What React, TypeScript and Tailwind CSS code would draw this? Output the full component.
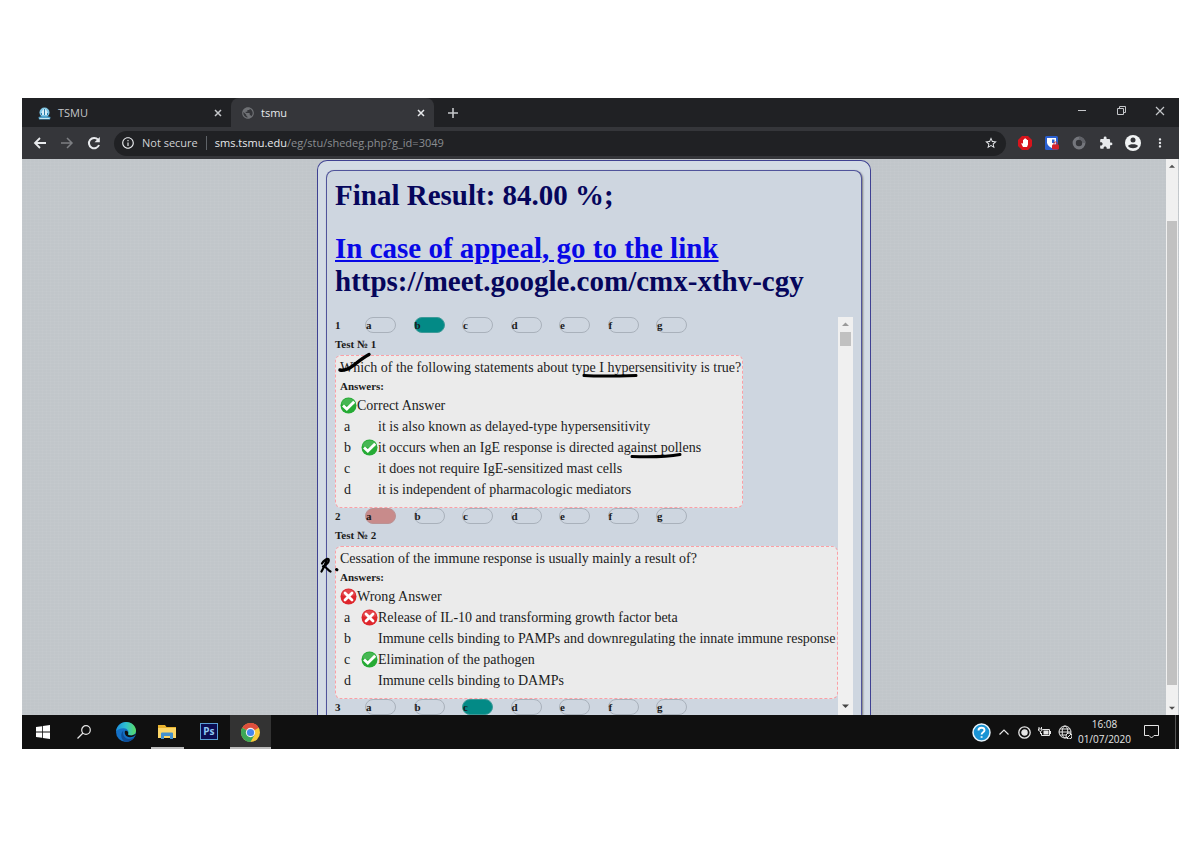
import type { ReactNode } from 'react';
import {
  MdExtension,
  MdInfoOutline,
  MdMoreVert,
  MdPublic,
  MdStarBorder,
} from 'react-icons/md';
import { clsx } from 'clsx';

type Mark = 'right' | 'wrong';

interface Question {
  number: number;
  chosen: string;
  chosenMark: Mark;
  text?: string;
  answers?: { key: string; text: string; mark?: Mark }[];
  ink?: ReactNode;
}

const OPTIONS = ['a', 'b', 'c', 'd', 'e', 'f', 'g'];

const QUESTIONS: Question[] = [
  {
    number: 1,
    chosen: 'b',
    chosenMark: 'right',
    text: 'Which of the following statements about type I hypersensitivity is true?',
    answers: [
      { key: 'a', text: 'it is also known as delayed-type hypersensitivity' },
      { key: 'b', text: 'it occurs when an IgE response is directed against pollens', mark: 'right' },
      { key: 'c', text: 'it does not require IgE-sensitized mast cells' },
      { key: 'd', text: 'it is independent of pharmacologic mediators' },
    ],
    ink: (
      <svg className="pointer-events-none absolute -top-1 left-0 h-28 w-[398px]" viewBox="0 0 398 112" fill="none" stroke="#000" strokeWidth="3" strokeLinecap="round" aria-hidden="true">
        <path d="M4 18C9 19 13 17 18 13C23 9 28 5 33 2.500" strokeWidth="3.500" />
        <path d="M248 23.500C264 24.500 284 24 300 23.500" />
        <path d="M296 104.500C311 105 330 105 344 102.500" />
      </svg>
    ),
  },
  {
    number: 2,
    chosen: 'a',
    chosenMark: 'wrong',
    text: 'Cessation of the immune response is usually mainly a result of?',
    answers: [
      { key: 'a', text: 'Release of IL-10 and transforming growth factor beta', mark: 'wrong' },
      { key: 'b', text: 'Immune cells binding to PAMPs and downregulating the innate immune response' },
      { key: 'c', text: 'Elimination of the pathogen', mark: 'right' },
      { key: 'd', text: 'Immune cells binding to DAMPs' },
    ],
    ink: (
      <svg className="pointer-events-none absolute top-2.5 -left-4 h-5 w-5" viewBox="0 0 20 20" fill="none" stroke="#000" strokeWidth="3" strokeLinecap="round" strokeLinejoin="round" aria-hidden="true">
        <path d="M2 6.500C3.500 3.500 7 1.200 8.500 2.200C9.500 4.500 6.500 7.500 3 9.500M6.500 3C5.500 7.500 3.500 11 1.500 14.500M3.500 9.500C6.500 9.500 7.500 13 10.500 14.500" strokeWidth="2.200" />
        <path d="M16.500 12.500L17 12.800" />
      </svg>
    ),
  },
  { number: 3, chosen: 'c', chosenMark: 'right' },
];

function MarkIcon({ mark }: { mark: Mark }) {
  return (
    <svg className="h-[17px] w-[17px] shrink-0" viewBox="0 0 17 17" fill="none" aria-hidden="true">
      <circle cx="8.500" cy="8.500" r="8" fill={mark === 'right' ? '#26ab35' : '#de262c'} />
      <path d="M1.500 7A7.200 7.200 0 0 1 15.500 7C11 9 6 9 1.500 7Z" fill="#fff" opacity="0.15" />
      {mark === 'right' ? (
        <path d="M3 8.500L6.800 12L14.200 4.800" stroke="#fff" strokeWidth="2.800" />
      ) : (
        <path d="M5 5L12 12M12 5L5 12" stroke="#fff" strokeWidth="2.800" strokeLinecap="round" />
      )}
    </svg>
  );
}

function CloseIcon() {
  return (
    <svg className="h-2 w-2" viewBox="0 0 8 8" stroke="currentColor" strokeWidth="1.500" aria-hidden="true">
      <path d="M1 1L7 7M7 1L1 7" />
    </svg>
  );
}

function TabStrip() {
  return (
    <div className="flex h-[29px] items-stretch bg-[#202124] text-[11px] text-[#c5c7ca]">
      <div className="flex w-[209px] items-center pt-px pr-[9px] pl-4">
        <svg className="mr-[7px] h-[13px] w-[13px]" viewBox="0 0 13 13" aria-hidden="true">
          <circle cx="6.500" cy="5.500" r="5" fill="#7fc6e4" />
          <path d="M6.500 1.500C4 3 3 5.500 3.500 8H9.500C10 5.500 9 3 6.500 1.500Z" fill="#d9eff7" />
          <path d="M3.500 8V6M6.500 2V8M9.500 8V6" stroke="#2a7fae" fill="none" />
          <path d="M0.500 10C4 8.500 9 8.500 12.500 10L12 12.500H1Z" fill="#4fa3cb" />
          <path d="M1.500 11.500H11.500" stroke="#c8e8f2" />
        </svg>
        <span className="flex-1">TSMU</span>
        <button aria-label="Close TSMU tab"><CloseIcon /></button>
      </div>
      <div className="flex w-[203px] items-center rounded-t-lg bg-[#35363a] pt-px pr-[9px] pl-2.5 text-[#e8eaed]">
        <MdPublic className="mr-1.5 h-3.5 w-3.5 text-[#6f7175]" />
        <span className="flex-1 font-medium">tsmu</span>
        <button aria-label="Close tsmu tab"><CloseIcon /></button>
      </div>
      <button aria-label="New tab" className="ml-3.5">
        <svg className="h-2.5 w-2.5" viewBox="0 0 10 10" stroke="currentColor" strokeWidth="1.600" aria-hidden="true">
          <path d="M5 0V10M0 5H10" />
        </svg>
      </button>
      <div className="mr-3.5 ml-auto flex items-center gap-[29px] pb-1">
        <button aria-label="Minimize">
          <svg className="h-2.5 w-2.5" viewBox="0 0 10 10" stroke="currentColor" aria-hidden="true"><path d="M1 4.500H9" /></svg>
        </button>
        <button aria-label="Restore">
          <svg className="h-2.5 w-2.5" viewBox="0 0 10 10" fill="none" stroke="currentColor" aria-hidden="true">
            <path d="M1.500 2.500H7.500V8.500H1.500ZM3.500 2.500V0.500H9.500V6.500H7.500" />
          </svg>
        </button>
        <button aria-label="Close window">
          <svg className="h-2.5 w-2.5" viewBox="0 0 10 10" stroke="currentColor" strokeWidth="1.200" aria-hidden="true"><path d="M1 1L9 9M9 1L1 9" /></svg>
        </button>
      </div>
    </div>
  );
}

function Toolbar() {
  return (
    <div className="flex h-8 items-center bg-[#35363a] pr-3 pl-2.5 text-[#e8eaed]">
      <div className="flex items-center gap-[11px]">
        <button aria-label="Back">
          <svg className="h-4 w-4" viewBox="0 0 16 16" fill="none" stroke="currentColor" strokeWidth="1.800" aria-hidden="true">
            <path d="M14 8H3.500M8 3L3 8L8 13" />
          </svg>
        </button>
        <button aria-label="Forward" className="text-[#7d7f83]">
          <svg className="h-4 w-4" viewBox="0 0 16 16" fill="none" stroke="currentColor" strokeWidth="1.500" aria-hidden="true">
            <path d="M2 8H12.500M8 3L13 8L8 13" />
          </svg>
        </button>
        <button aria-label="Reload">
          <svg className="h-4 w-4" viewBox="0 0 16 16" fill="none" stroke="currentColor" strokeWidth="2" aria-hidden="true">
            <path d="M13 10A5.200 5.200 0 1 1 12 4.600" />
            <path d="M13.800 2V7.300H8.500Z" fill="currentColor" stroke="none" />
          </svg>
        </button>
      </div>
      <div className="ml-3 flex h-[25px] flex-1 items-center rounded-full bg-[#202124] pr-2 pl-[7px] text-[11px] font-medium">
        <MdInfoOutline className="mr-[7px] h-3.5 w-3.5" />
        <span className="text-[#d0d2d5]">Not secure</span>
        <span className="mx-2 h-3.5 w-px bg-[#5f6368]" />
        <span className="flex-1 text-[#8a8d91]"><span className="text-[#e8eaed]">sms.tsmu.edu</span>/eg/stu/shedeg.php?g_id=3049</span>
        <button aria-label="Bookmark this page"><MdStarBorder className="h-3.5 w-3.5" /></button>
      </div>
      <div className="ml-3 flex items-center gap-[13px]">
        <button aria-label="Ad blocker">
          <svg className="h-3.5 w-3.5" viewBox="0 0 14 14" aria-hidden="true">
            <path d="M4 0H10L14 4V10L10 14H4L0 10V4Z" fill="#d8141c" />
            <path d="M5 11L3.200 7.500L4.200 7L5 8V3.800H6V2.800H7V2.500H8V3.200H9V4H10V8.500L9 11H5Z" fill="#fff" />
          </svg>
        </button>
        <button aria-label="Password manager">
          <svg className="h-3.5 w-3.5" viewBox="0 0 14 14" aria-hidden="true">
            <rect width="13" height="14" rx="1.500" fill="#2a5fd0" />
            <path d="M2 2H11V6.500C11 9 9 11 6.700 12C4.500 11 2 9 2 6.500Z" fill="#fff" />
            <path d="M7 3.500H9.500V7H7Z" fill="#2a5fd0" />
            <rect x="7" y="8.500" width="7" height="5" rx="1" fill="#d4202c" />
            <path d="M9 9V7.500A1.500 1.500 0 0 1 12 7.500V9" fill="none" stroke="#d4202c" />
          </svg>
        </button>
        <button aria-label="Privacy extension">
          <svg className="h-3.5 w-3.5" viewBox="0 0 14 14" fill="none" aria-hidden="true">
            <circle cx="7" cy="7" r="4.800" stroke="#74767c" strokeWidth="3.200" />
            <path d="M7 2.200A4.800 4.800 0 0 1 11.800 7" stroke="#606268" strokeWidth="3.200" />
          </svg>
        </button>
        <button aria-label="Extensions"><MdExtension className="h-3.5 w-3.5" /></button>
        <button aria-label="Profile" className="-mx-px">
          <svg className="h-4 w-4" viewBox="0 0 16 16" aria-hidden="true">
            <circle cx="8" cy="8" r="8" fill="#f1f3f4" />
            <circle cx="8" cy="5" r="2.500" fill="#35363a" />
            <path d="M3 11C4 8.500 12 8.500 13 11C11 14 5 14 3 11Z" fill="#35363a" />
          </svg>
        </button>
        <button aria-label="Menu"><MdMoreVert className="h-3.5 w-3.5" /></button>
      </div>
    </div>
  );
}

function ScrollArrow({ up, className }: { up?: boolean; className?: string }) {
  return (
    <svg className={clsx('h-3.5 w-full', className)} viewBox="0 0 14 14" aria-hidden="true">
      <path d={up ? 'M3.500 9H10.500L7 5.500Z' : 'M3.500 5.500H10.500L7 9Z'} fill="currentColor" />
    </svg>
  );
}

function AnswerKey({ question }: { question: Question }) {
  return (
    <div className="flex h-4 items-center text-[11px] font-bold">
      <span className="w-[30px] leading-3">{question.number}</span>
      <div className="flex w-[322px] justify-between">
        {OPTIONS.map((option) => (
          <span
            key={option}
            className={clsx(
              'h-4 w-[31px] rounded-full border leading-[14px]',
              option !== question.chosen && 'border-[#a9b1bb]',
              option === question.chosen && question.chosenMark === 'right' && 'border-[#3d9a98] bg-[#038a86]',
              option === question.chosen && question.chosenMark === 'wrong' && 'border-[#bb9294] bg-[#c88b8b]',
            )}
          >
            {option}
          </span>
        ))}
      </div>
    </div>
  );
}

function QuestionBlock({ question }: { question: Question }) {
  return (
    <section>
      <AnswerKey question={question} />
      {question.answers && (
        <>
          <h2 className="py-[3px] text-[11px] leading-4 font-bold">Test № {question.number}</h2>
          <div className="relative w-fit rounded-md border border-dashed border-[#fba0a6] bg-[#ebebeb] pt-0.5 pr-px pb-[7px] pl-1 text-[14px] whitespace-nowrap text-[#1c1c1c]">
            <p className="leading-[19px]">{question.text}</p>
            <h3 className="text-[11px] leading-[18px] font-bold">Answers:</h3>
            <p className="flex h-[21px] items-center leading-[21px]">
              <MarkIcon mark={question.chosenMark} />
              {question.chosenMark === 'right' ? 'Correct Answer' : 'Wrong Answer'}
            </p>
            <ul>
              {question.answers.map((answer) => (
                <li key={answer.key} className="flex h-[21px] items-center pl-1 leading-[21px]">
                  <span className="w-[17px]">{answer.key}</span>
                  <span className="w-[17px]">{answer.mark && <MarkIcon mark={answer.mark} />}</span>
                  {answer.text}
                </li>
              ))}
            </ul>
            {question.ink}
          </div>
        </>
      )}
    </section>
  );
}

function ResultPage() {
  return (
    <div className="flex min-h-0 flex-1 bg-[#c1c6ca] bg-[repeating-linear-gradient(0deg,#ffffff08_0px,#ffffff08_1px,transparent_1px,transparent_3px),repeating-linear-gradient(90deg,#ffffff08_0px,#ffffff08_1px,transparent_1px,transparent_4px)]">
      <main className="min-w-0 flex-1 overflow-hidden pt-px font-['Liberation_Serif',serif]">
        <div className="mx-auto flex h-full w-[554px] flex-col rounded-t-[10px] border border-b-0 border-[#3f4192] bg-[#d3dbe5] px-2 pt-[9px]">
          <div className="flex min-h-0 flex-1 flex-col rounded-t-lg border border-b-0 border-[#50549b] bg-[#ced6e0] pt-2 pl-2 shadow-[1px_1px_2px_#777]">
            <h1 className="text-[29px] leading-8 font-bold text-[#06065c]">Final Result: 84.00 %;</h1>
            <p className="mt-[21px] text-[29px] leading-[33px] font-bold text-[#06065c]">
              <a href="https://meet.google.com/cmx-xthv-cgy" className="text-[#0808e6] underline">In case of appeal, go to the link</a>
              <br />
              https://meet.google.com/cmx-xthv-cgy
            </p>
            <div className="mt-[19px] flex min-h-0 flex-1 pr-2">
              <div className="min-w-0 flex-1 text-[#1a1a1a]">
                {QUESTIONS.map((question) => (
                  <QuestionBlock key={question.number} question={question} />
                ))}
              </div>
              <div className="flex w-[15px] flex-col bg-[#f0f0f0]">
                <ScrollArrow up className="text-[#9a9a9a]" />
                <div className="mx-0.5 mt-px h-3.5 bg-[#c1c1c1]" />
                <ScrollArrow className="mt-auto mb-0.5 text-[#444]" />
              </div>
            </div>
          </div>
        </div>
      </main>
      <div className="mr-px flex w-3 flex-col bg-[#f0f0f0]">
        <ScrollArrow up className="text-[#505050]" />
        <div className="mx-px mt-12 flex-1 bg-[#c1c1c1]" />
        <ScrollArrow className="mt-4 text-[#505050]" />
      </div>
    </div>
  );
}

function Taskbar() {
  return (
    <footer className="flex h-[34px] items-stretch bg-[#101010] text-[#e6e6e6]">
      <div className="grid w-[249px] grid-cols-6">
        <button aria-label="Start" className="flex items-center justify-center">
          <svg className="h-3.5 w-3.5" viewBox="0 0 14 14" fill="#fff" aria-hidden="true">
            <path d="M0 2L6 1.200V6.600H0ZM6.800 1.100L14 0V6.600H6.800ZM0 7.400H6V12.800L0 12ZM6.800 7.400H14V14L6.800 12.900Z" />
          </svg>
        </button>
        <button aria-label="Search" className="flex items-center justify-center">
          <svg className="h-3.5 w-3.5" viewBox="0 0 14 14" fill="none" stroke="#e6e6e6" strokeWidth="1.200" aria-hidden="true">
            <circle cx="9" cy="5" r="4.300" />
            <path d="M6 8L0.500 13.500" />
          </svg>
        </button>
        <button aria-label="Microsoft Edge" className="flex items-center justify-center">
          <svg className="h-5 w-5" viewBox="0 0 20 20" aria-hidden="true">
            <defs>
              <linearGradient id="edge-top" x1="0" y1="0.500" x2="1" y2="0.500">
                <stop offset="0" stopColor="#1b8fe0" />
                <stop offset="0.500" stopColor="#2fc0cf" />
                <stop offset="1" stopColor="#5bdc62" />
              </linearGradient>
            </defs>
            <circle cx="10" cy="10" r="10" fill="#1470c6" />
            <path d="M0 9.500C0.500 4 5 0 10.200 0C16 0 20 4.300 20 8.500C20 11.500 17.800 13.500 15 13.500C12.500 13.500 11.500 12.500 12.200 11.500C13.300 9.500 11.500 6.500 8 6.300C4.500 6 1.500 7.500 0 9.500Z" fill="url(#edge-top)" />
            <path d="M7.500 8.500C5.800 12.500 9 17.800 14.500 16.800C16.500 16.500 18 15.500 18.700 14.500C16.500 19 12 20.200 9.500 19.900C4.500 18 4 11.500 7.500 8.500Z" fill="#0d4d98" />
            <path d="M9 9C8 11.500 9.800 15.200 14 15.300C16.500 15.300 18.500 14 20 12.500C19.500 12 18.500 12.800 15.500 13.500C12.500 13.500 11.500 12.500 12.200 11.500C12.700 10 11 8 9 9Z" fill="#101010" />
          </svg>
        </button>
        <button aria-label="File Explorer" className="relative flex items-center justify-center">
          <svg className="h-4 w-[18px]" viewBox="0 0 18 16" aria-hidden="true">
            <path d="M0 1H7L8.500 3H18V14H0Z" fill="#e9b32e" />
            <path d="M0 4H18V14H0Z" fill="#fcd667" />
            <path d="M3 15V9.500Q3 8.500 4 8.500H14Q15 8.500 15 9.500V15H12V12H6V15Z" fill="#4391ce" />
          </svg>
          <span className="absolute inset-x-1 bottom-0 h-0.5 bg-[#bcbcbc]" />
        </button>
        <button aria-label="Photoshop" className="flex items-center justify-center pb-0.5">
          <span className="flex h-[17px] w-[18px] items-center justify-center border border-[#5b9fd4] bg-[#0b0d52] text-[10px] font-bold text-[#8fc8f2]">Ps</span>
        </button>
        <button aria-label="Google Chrome" className="relative flex items-center justify-center bg-[#333]">
          <svg className="h-[19px] w-[19px]" viewBox="0 0 18 18" aria-hidden="true">
            <circle cx="9" cy="9" r="9" fill="#f8cb3a" />
            <path d="M9 9L1.200 4.500A9 9 0 0 1 16.800 4.500Z" fill="#de4f3e" />
            <path d="M9 4.500H16.800A9 9 0 0 0 9 0Z" fill="#de4f3e" />
            <path d="M1.200 4.500A9 9 0 0 0 9 18L12.900 11.200L9 9Z" fill="#3da757" />
            <circle cx="9" cy="9" r="4.400" fill="#f3f3f3" />
            <circle cx="9" cy="9" r="3.400" fill="#4587ee" />
          </svg>
          <span className="absolute inset-x-0 bottom-0 h-0.5 bg-[#bcbcbc]" />
        </button>
      </div>
      <div className="ml-auto flex items-center">
        <button aria-label="Get help">
          <svg className="h-[19px] w-[19px]" viewBox="0 0 19 19" fill="none" aria-hidden="true">
            <circle cx="9.500" cy="9.500" r="8.500" fill="#1a93d4" stroke="#e8f4fb" strokeWidth="1.500" />
            <path d="M6.500 7.500C6.500 5.700 7.800 4.800 9.500 4.800C11.300 4.800 12.500 5.800 12.500 7.200C12.500 9.200 9.600 9.200 9.600 11.500M9.600 13.200V14.800" stroke="#fff" strokeWidth="1.900" />
          </svg>
        </button>
        <button aria-label="Show hidden icons" className="ml-2">
          <svg className="h-2.5 w-2.5" viewBox="0 0 10 10" fill="none" stroke="currentColor" strokeWidth="1.200" aria-hidden="true"><path d="M0.500 7.500L5 3L9.500 7.500" /></svg>
        </button>
        <svg className="ml-[9px] h-[13px] w-[13px]" viewBox="0 0 13 13" fill="none" stroke="currentColor" strokeWidth="1.300" aria-hidden="true">
          <circle cx="6.500" cy="6.500" r="5.700" />
          <circle cx="6.500" cy="6.500" r="2.600" fill="currentColor" />
        </svg>
        <svg className="ml-[7px] h-[13px] w-[13px]" viewBox="0 0 13 13" fill="none" stroke="currentColor" aria-hidden="true">
          <path d="M4.500 3.500H11.500V9.500H3.500V7M1 1V3M3.500 1V3M0.500 3H4V4.500L2.500 5.500L0.500 4.500ZM2.500 5.500V8M12.500 5V8" />
          <path d="M5.500 6.500H10.500" strokeWidth="4" />
        </svg>
        <svg className="ml-[7px] h-3.5 w-3.5" viewBox="0 0 14 14" fill="none" stroke="currentColor" aria-hidden="true">
          <circle cx="7" cy="7" r="6" />
          <ellipse cx="7" cy="7" rx="2.800" ry="6" />
          <path d="M1 7H13M2 4H12M2 10H12" />
          <circle cx="11" cy="11" r="3" fill="#101010" />
          <path d="M9 13L13 9" />
        </svg>
        <time className="ml-1.5 text-center text-[10px] leading-[15px]">
          16:08
          <br />
          01/07/2020
        </time>
        <button aria-label="Notifications" className="ml-[13px]">
          <svg className="h-3.5 w-[15px]" viewBox="0 0 15 14" fill="none" stroke="currentColor" aria-hidden="true">
            <path d="M0.500 0.500H14.500V10.500H10L7.500 13L5 10.500H0.500Z" />
          </svg>
        </button>
        <span className="mr-[3px] ml-4 h-[34px] w-px bg-[#555]" />
      </div>
    </footer>
  );
}

export default function App() {
  return (
    <div className="flex h-screen flex-col bg-white pt-[98px] pr-[21px] pb-[99px] pl-[22px] font-['Open_Sans','Noto_Sans',sans-serif]">
      <TabStrip />
      <Toolbar />
      <ResultPage />
      <Taskbar />
    </div>
  );
}
